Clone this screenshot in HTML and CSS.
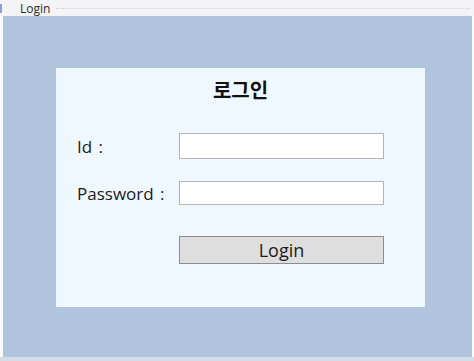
FILE: index.html
```html
<!DOCTYPE html>
<html lang="ko">
<head>
  <meta charset="UTF-8">
  <meta name="viewport" content="width=device-width, initial-scale=1.0">
  <title>Login</title>
  <link rel="stylesheet" href="styles.css">
</head>
<body>
  <div class="tab-strip">
    <span class="tab-mark"></span>
    <span class="tab-title">Login</span>
    <span class="tab-dots"></span>
  </div>
  <div class="canvas">
    <div class="panel">
      <h1>로그인</h1>
      <div class="form-row first">
        <label for="user-id">Id :</label>
        <input type="text" id="user-id" class="field">
      </div>
      <div class="form-row second">
        <label for="password">Password :</label>
        <input type="password" id="password" class="field short">
      </div>
      <div class="form-row action">
        <span class="spacer"></span>
        <button type="button" class="login-button">Login</button>
      </div>
    </div>
  </div>
  <div class="bottom-strip"></div>
</body>
</html>
```

FILE: styles.css
```css
:root {
  --steel: #b0c4de;
  --alice: #f0f8ff;
  --strip: #f4f4f6;
  --text: #1a1a1a;
  --border: #b4b4b4;
}
* {
  box-sizing: border-box;
  margin: 0;
  padding: 0;
}
body {
  width: 474px;
  height: 361px;
  overflow: hidden;
  background: #fafbfc;
  font-family: 'Open Sans', 'Noto Sans', sans-serif;
  color: var(--text);
}
.tab-strip {
  height: 16px;
  display: flex;
  align-items: flex-end;
  background: var(--strip);
}
.tab-mark {
  width: 2px;
  height: 9px;
  background: #8aa0d8;
  margin-bottom: 3px;
}
.tab-title {
  font-size: 12px;
  line-height: 14px;
  margin-left: 18px;
  color: #2a2a2a;
}
.tab-dots {
  flex: 1;
  height: 0;
  margin: 0 4px 7px 6px;
  border-top: 1px dotted #c8d0dc;
}
.canvas {
  margin-left: 3px;
  width: 469px;
  height: 341px;
  background: var(--steel);
  padding: 52px 0 0 53px;
}
.panel {
  width: 369px;
  height: 239px;
  background: var(--alice);
  padding: 9px 0 0 21px;
}
h1 {
  font-family: 'Noto Sans CJK KR', sans-serif;
  font-size: 20px;
  line-height: 25px;
  font-weight: 700;
  text-align: center;
  padding-right: 21px;
  color: #111;
}
.form-row {
  display: flex;
  align-items: center;
}
.form-row.first {
  margin-top: 31px;
}
.form-row.second {
  margin-top: 22px;
}
.form-row.action {
  margin-top: 31px;
}
label, .spacer {
  width: 102px;
  font-size: 17px;
  line-height: 20px;
  padding-top: 2px;
}
label {
  word-spacing: 2px;
}
.field {
  width: 205px;
  height: 26px;
  border: 1px solid var(--border);
  background: #fff;
}
.field.short {
  height: 24px;
}
.login-button {
  width: 205px;
  height: 28px;
  border: 1px solid #8c8c8c;
  background: #dedede;
  font-family: 'Open Sans', 'Noto Sans', sans-serif;
  font-size: 18px;
  line-height: 26px;
  color: var(--text);
}
.bottom-strip {
  height: 4px;
  background: #d6dce6;
}
```
